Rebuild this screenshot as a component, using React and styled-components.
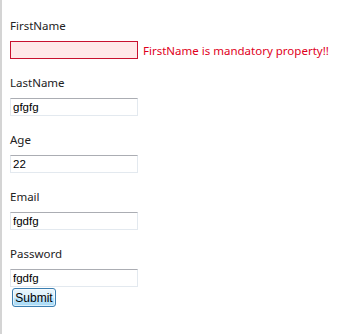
import React from "react";
import styled, { createGlobalStyle } from "styled-components";

const Global = createGlobalStyle`
  html, body { margin: 0; padding: 0; background: #fff; }
  body { width: 360px; height: 334px; overflow: hidden; }
`;

const Page = styled.div`
  box-sizing: border-box;
  width: 360px;
  height: 334px;
  border-left: 2px solid #d4d4d4;
  padding: 2px 0 0 8px;
`;

const Field = styled.div`
  margin-top: 16px;
`;

const Label = styled.div`
  font-family: "Noto Sans", sans-serif;
  font-size: 11.5px;
  line-height: 16px;
  color: #222;
  margin-bottom: 7px;
`;

const Row = styled.div`
  display: flex;
  align-items: center;
  gap: 5px;
  height: 18px;
`;

const Input = styled.input`
  box-sizing: border-box;
  display: block;
  width: 128px;
  height: 18px;
  margin: ${(p) => (p.$invalid ? "0" : "1px 0 0")};
  padding: 0 2px;
  font-family: "Liberation Sans", Arial, sans-serif;
  font-size: 11.5px;
  color: #000;
  outline: none;
  background: ${(p) => (p.$invalid ? "#ffe8e8" : "#fff")};
  border: 1px solid ${(p) => (p.$invalid ? "#c8102e" : "#e3e9ef")};
  border-top-color: ${(p) => (p.$invalid ? "#c8102e" : "#abadb3")};
`;

const Error = styled.span`
  font-family: "Noto Sans", sans-serif;
  font-size: 11.5px;
  color: #e0001b;
`;

const Submit = styled.button`
  box-sizing: border-box;
  display: block;
  margin: 1px 0 0 2px;
  width: 44px;
  height: 19px;
  padding: 0;
  font-family: "Liberation Sans", Arial, sans-serif;
  font-size: 12px;
  color: #000;
  border: 1px solid #3c7fb1;
  border-radius: 3px;
  background: linear-gradient(#eaf6fd 0%, #d9f0fc 50%, #bee6fd 51%, #a7d9f5 100%);
  box-shadow: inset 0 0 0 1px rgba(255, 255, 255, 0.6);
`;

const fields = [
  { label: "LastName", value: "gfgfg" },
  { label: "Age", value: "22" },
  { label: "Email", value: "fgdfg" },
  { label: "Password", value: "fgdfg" },
];

export default function App() {
  return (
    <>
      <Global />
      <Page>
        <Field>
          <Label>FirstName</Label>
          <Row>
            <Input $invalid defaultValue="" />
            <Error>FirstName is mandatory property!!</Error>
          </Row>
        </Field>
        {fields.map((f) => (
          <Field key={f.label}>
            <Label>{f.label}</Label>
            <Input defaultValue={f.value} />
          </Field>
        ))}
        <Submit type="button">Submit</Submit>
      </Page>
    </>
  );
}
